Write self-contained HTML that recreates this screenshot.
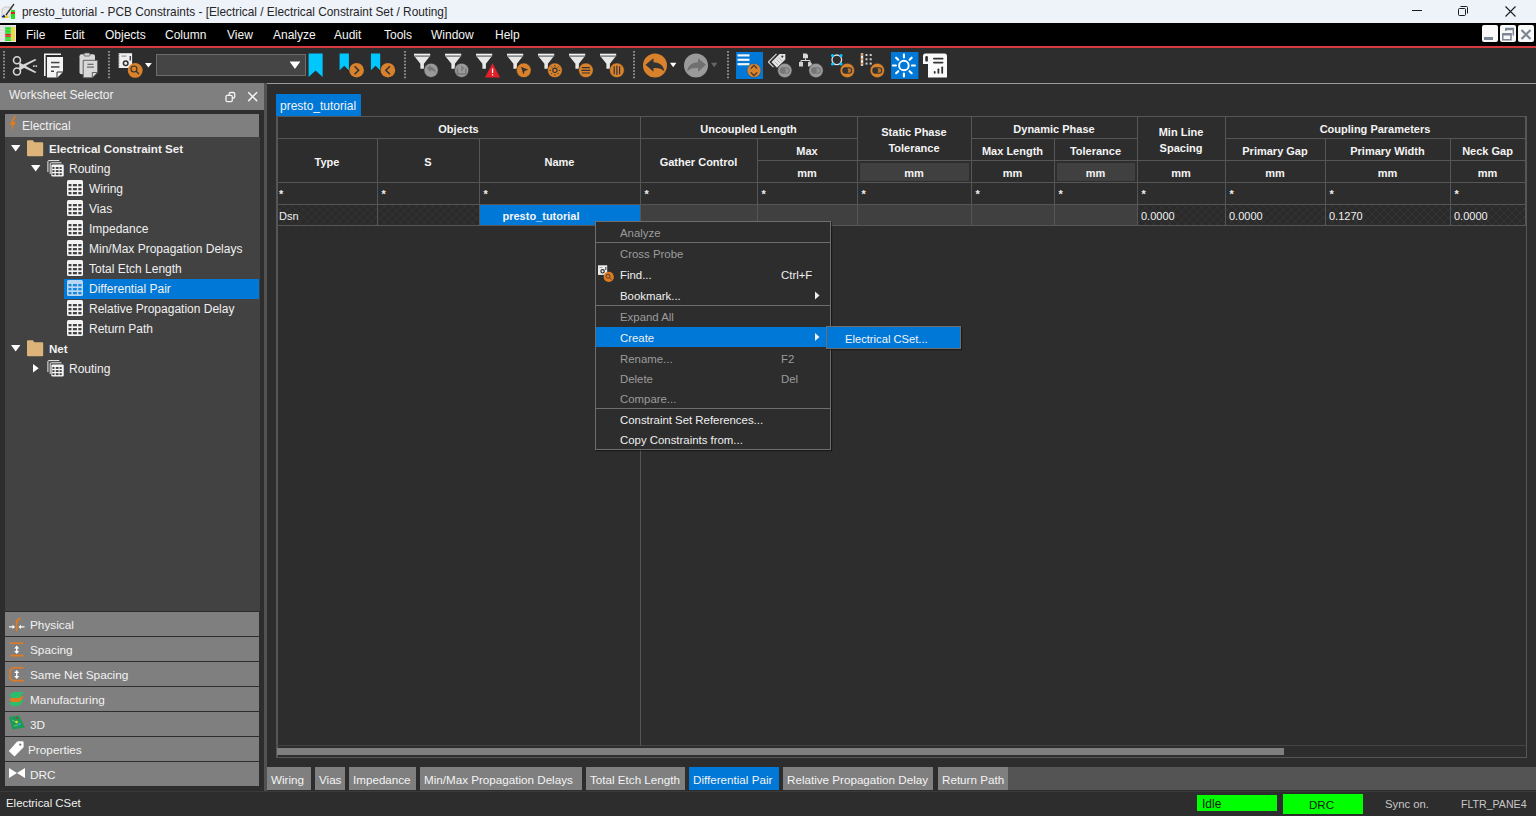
<!DOCTYPE html>
<html><head><meta charset="utf-8"><style>
*{box-sizing:border-box;margin:0;padding:0}
html,body{width:1536px;height:816px;overflow:hidden;background:#2d2d2d;font-family:"Liberation Sans",sans-serif;font-size:12px;color:#fff}
.a{position:absolute}
.t{position:absolute;white-space:nowrap;line-height:14px}
.b{font-weight:bold}
svg{position:absolute;overflow:visible}
.mdi{position:absolute;top:25px;width:16px;height:17px;background:#f9f9f9;border-radius:2px}
.lbtn{position:absolute;left:5px;width:254px;height:24px;background:#7f7f7f}
.lbtn .t{top:5px;left:25px;color:#f2f2f2}
.tr{color:#f0f0f0}
.hl{position:absolute;height:1px;background:#565656}
.vl{position:absolute;width:1px;background:#565656}
.hd{position:absolute;text-align:center;font-weight:bold;font-size:11px;line-height:14px;color:#f4f4f4;white-space:nowrap}
.cm{color:#f0f0f0}
.cmd{color:#9c9c9c}
.tab{position:absolute;top:767px;height:23px;background:#7f7f7f}
.tab .t{top:5px;left:4px;color:#f4f4f4}
.hatch{background-color:#2b2b2b;background-image:repeating-linear-gradient(45deg,rgba(255,255,255,.045) 0 1px,transparent 1px 5.66px),repeating-linear-gradient(-45deg,rgba(255,255,255,.045) 0 1px,transparent 1px 5.66px)}
</style></head><body>
<div class="a" style="left:0px;top:0px;width:1536px;height:23px;background:#eef2f9;"></div>
<div class="t" style="left:22px;top:5px;color:#262626;font-size:11.85px">presto_tutorial - PCB Constraints - [Electrical / Electrical Constraint Set / Routing]</div>
<svg style="left:0;top:0" width="1536" height="23"><line x1="1412" y1="10.5" x2="1422" y2="10.5" stroke="#1b1b1b" stroke-width="1"/><rect x="1458.5" y="8.5" width="7" height="7" fill="none" stroke="#1b1b1b" rx="1"/><path d="M1460.5 6.5h6a1 1 0 0 1 1 1v6" fill="none" stroke="#1b1b1b"/><path d="M1505.5 6.5l10 10M1515.5 6.5l-10 10" stroke="#1b1b1b" stroke-width="1.1"/></svg>
<svg style="left:0;top:0" width="20" height="23"><path d="M2 9 Q4 6 10 7 L12 8 L10 17 L2 18 Z" fill="#e8e8e8" stroke="#b0b0b0" stroke-width=".6"/><path d="M1.5 17 L4 14.5 L6 18 Z" fill="#001a8c"/><path d="M4 18 L7 14 L8 18 Z" fill="#e8d000"/><line x1="6" y1="15" x2="14" y2="4" stroke="#333" stroke-width="1.3"/><rect x="11" y="10" width="4" height="9" fill="#20e020"/><rect x="11" y="12" width="4" height="2" fill="#e02020"/></svg>
<div class="a" style="left:0px;top:23px;width:1536px;height:23px;background:#000;"></div>
<div class="t" style="left:26px;top:28px;color:#f4f4f4">File</div>
<div class="t" style="left:64px;top:28px;color:#f4f4f4">Edit</div>
<div class="t" style="left:105px;top:28px;color:#f4f4f4">Objects</div>
<div class="t" style="left:165px;top:28px;color:#f4f4f4">Column</div>
<div class="t" style="left:227px;top:28px;color:#f4f4f4">View</div>
<div class="t" style="left:273px;top:28px;color:#f4f4f4">Analyze</div>
<div class="t" style="left:334px;top:28px;color:#f4f4f4">Audit</div>
<div class="t" style="left:384px;top:28px;color:#f4f4f4">Tools</div>
<div class="t" style="left:431px;top:28px;color:#f4f4f4">Window</div>
<div class="t" style="left:495px;top:28px;color:#f4f4f4">Help</div>
<svg style="left:0;top:25px" width="17" height="18"><rect x="0" y="0" width="16" height="17" fill="#e8e8e8"/><rect x="5" y="2" width="6" height="14" fill="#22e022"/><rect x="11" y="2" width="4" height="14" fill="#f0e020"/><rect x="5" y="9" width="6" height="3" fill="#e02020"/><path d="M0 2H16M0 5H16M0 8H16M0 11H16M0 14H16M5 0V17M11 0V17" stroke="#c8c8c8" stroke-width=".5"/></svg>
<div class="a" style="left:1482px;top:25px;width:16px;height:17px;background:#f9f9f9;border-radius:2px"></div>
<div class="a" style="left:1500px;top:25px;width:16px;height:17px;background:#f9f9f9;border-radius:2px"></div>
<div class="a" style="left:1518px;top:25px;width:16px;height:17px;background:#f9f9f9;border-radius:2px"></div>
<svg style="left:0;top:0" width="1536" height="48"><rect x="1484" y="37" width="9" height="3" fill="#7b8794"/><path d="M1505.8 31V28.5H1513.3V35.5" fill="none" stroke="#7b8794" stroke-width="1.5"/><rect x="1505.8" y="28" width="7.8" height="2.2" fill="#7b8794"/><rect x="1502.8" y="33.8" width="8.2" height="6" fill="none" stroke="#7b8794" stroke-width="1.5"/><rect x="1502.3" y="33.2" width="9.2" height="2.3" fill="#7b8794"/><path d="M1521.5 30l9 9M1530.5 30l-9 9" stroke="#7b8794" stroke-width="2.2"/></svg>
<div class="a" style="left:0px;top:46px;width:1536px;height:2px;background:#d8393a;"></div>
<div class="a" style="left:0px;top:48px;width:1536px;height:35px;background:#2d2d2d;"></div>
<svg style="left:0;top:0" width="1536" height="83"><rect x="3" y="51.0" width="2" height="1.7" fill="#8c8c8c"/><rect x="3" y="54.2" width="2" height="1.7" fill="#8c8c8c"/><rect x="3" y="57.4" width="2" height="1.7" fill="#8c8c8c"/><rect x="3" y="60.6" width="2" height="1.7" fill="#8c8c8c"/><rect x="3" y="63.8" width="2" height="1.7" fill="#8c8c8c"/><rect x="3" y="67.0" width="2" height="1.7" fill="#8c8c8c"/><rect x="3" y="70.2" width="2" height="1.7" fill="#8c8c8c"/><rect x="3" y="73.4" width="2" height="1.7" fill="#8c8c8c"/><rect x="3" y="76.6" width="2" height="1.7" fill="#8c8c8c"/><rect x="108" y="51.0" width="2" height="1.7" fill="#8c8c8c"/><rect x="108" y="54.2" width="2" height="1.7" fill="#8c8c8c"/><rect x="108" y="57.4" width="2" height="1.7" fill="#8c8c8c"/><rect x="108" y="60.6" width="2" height="1.7" fill="#8c8c8c"/><rect x="108" y="63.8" width="2" height="1.7" fill="#8c8c8c"/><rect x="108" y="67.0" width="2" height="1.7" fill="#8c8c8c"/><rect x="108" y="70.2" width="2" height="1.7" fill="#8c8c8c"/><rect x="108" y="73.4" width="2" height="1.7" fill="#8c8c8c"/><rect x="108" y="76.6" width="2" height="1.7" fill="#8c8c8c"/><rect x="404" y="51.0" width="2" height="1.7" fill="#8c8c8c"/><rect x="404" y="54.2" width="2" height="1.7" fill="#8c8c8c"/><rect x="404" y="57.4" width="2" height="1.7" fill="#8c8c8c"/><rect x="404" y="60.6" width="2" height="1.7" fill="#8c8c8c"/><rect x="404" y="63.8" width="2" height="1.7" fill="#8c8c8c"/><rect x="404" y="67.0" width="2" height="1.7" fill="#8c8c8c"/><rect x="404" y="70.2" width="2" height="1.7" fill="#8c8c8c"/><rect x="404" y="73.4" width="2" height="1.7" fill="#8c8c8c"/><rect x="404" y="76.6" width="2" height="1.7" fill="#8c8c8c"/><rect x="633" y="51.0" width="2" height="1.7" fill="#8c8c8c"/><rect x="633" y="54.2" width="2" height="1.7" fill="#8c8c8c"/><rect x="633" y="57.4" width="2" height="1.7" fill="#8c8c8c"/><rect x="633" y="60.6" width="2" height="1.7" fill="#8c8c8c"/><rect x="633" y="63.8" width="2" height="1.7" fill="#8c8c8c"/><rect x="633" y="67.0" width="2" height="1.7" fill="#8c8c8c"/><rect x="633" y="70.2" width="2" height="1.7" fill="#8c8c8c"/><rect x="633" y="73.4" width="2" height="1.7" fill="#8c8c8c"/><rect x="633" y="76.6" width="2" height="1.7" fill="#8c8c8c"/><rect x="727" y="51.0" width="2" height="1.7" fill="#8c8c8c"/><rect x="727" y="54.2" width="2" height="1.7" fill="#8c8c8c"/><rect x="727" y="57.4" width="2" height="1.7" fill="#8c8c8c"/><rect x="727" y="60.6" width="2" height="1.7" fill="#8c8c8c"/><rect x="727" y="63.8" width="2" height="1.7" fill="#8c8c8c"/><rect x="727" y="67.0" width="2" height="1.7" fill="#8c8c8c"/><rect x="727" y="70.2" width="2" height="1.7" fill="#8c8c8c"/><rect x="727" y="73.4" width="2" height="1.7" fill="#8c8c8c"/><rect x="727" y="76.6" width="2" height="1.7" fill="#8c8c8c"/><g fill="none" stroke="#d8d8d8" stroke-width="1.6"><circle cx="17" cy="60.3" r="3.5"/><circle cx="17" cy="71.5" r="3.5"/></g><path d="M19.5 62.5 L36.5 72 L35 73 L19 65.5Z" fill="#d8d8d8"/><path d="M19.5 69.3 L36.5 60 L35 59 L19 66.5Z" fill="#d8d8d8"/><path d="M19.5 69.3 L26 65.5" stroke="#d8d8d8" stroke-width="2.4"/><rect x="30" y="65.3" width="1.6" height="1.6" fill="#2d2d2d"/><rect x="33" y="65.3" width="1.6" height="1.6" fill="#d8d8d8"/><rect x="35.5" y="65.3" width="1.6" height="1.6" fill="#d8d8d8"/><path d="M44 76V53.5H61v1.6H45.6V76Z" fill="#f4f4f4"/><path d="M47 57H63V72L57.5 77.5H47Z" fill="#f4f4f4"/><path d="M57 77.5V72H63" fill="none" stroke="#2d2d2d" stroke-width="1"/><rect x="51" y="61.8" width="8.5" height="1.5" fill="#444"/><rect x="51" y="66.2" width="8.5" height="1.5" fill="#444"/><rect x="51" y="70.5" width="3" height="1.5" fill="#444"/><rect x="79.5" y="54.2" width="15.5" height="20" rx="2" fill="#d8d8d8"/><rect x="84" y="53" width="6" height="3" rx="1" fill="#d8d8d8" stroke="#555" stroke-width=".8"/><path d="M83.2 60.3H97.7V72.5L92.5 77.8H83.2Z" fill="#d8d8d8" stroke="#555" stroke-width=".9"/><path d="M92.3 77.8V72.5H97.7" fill="none" stroke="#555" stroke-width=".9"/><rect x="87.5" y="63.7" width="6" height="1.2" fill="#666"/><rect x="87" y="66.5" width="7" height="1.2" fill="#666"/><rect x="118.7" y="53.2" width="13.4" height="14.8" fill="#f0f0f0"/><path d="M119.3 54v13.5" stroke="#999" stroke-dasharray="1 1.2" stroke-width=".8"/><circle cx="125.7" cy="63.3" r="2.3" fill="none" stroke="#333" stroke-width="1.5"/><rect x="121.5" y="55.5" width="5" height="1.2" fill="#999"/><rect x="129.6" y="56" width="1.3" height="4.5" fill="#333"/><circle cx="135.2" cy="70.4" r="7.4" fill="#d9822b"/><circle cx="134" cy="69" r="3" fill="none" stroke="#333" stroke-width="1.1"/><path d="M136.2 71.2l2.8 2.8" stroke="#333" stroke-width="1.3"/><path d="M145 63h6.8l-3.4 4.4z" fill="#fff"/><rect x="156.5" y="54.5" width="149" height="21" fill="#454545" stroke="#6c6c6c" stroke-width="1"/><path d="M289.6 61.5h10.7l-5.35 7.5z" fill="#fff"/><path d="M308.6 53.6H322.6V77L315.6 70.5L308.6 77Z" fill="#00c8ff"/><path d="M339.6 53.6H348.90000000000003V70.3L344.25 65.7L339.6 70.3Z" fill="#00c8ff"/><circle cx="356.6" cy="70.2" r="7.3" fill="#d9822b"/><path d="M354.6 66.2L358.6 70.2L354.6 74.2" fill="none" stroke="#333" stroke-width="1.6"/><path d="M370.9 53.6H380.2V70.3L375.54999999999995 65.7L370.9 70.3Z" fill="#00c8ff"/><circle cx="387.9" cy="70.2" r="7.3" fill="#d9822b"/><path d="M389.9 66.2L385.9 70.2L389.9 74.2" fill="none" stroke="#333" stroke-width="1.6"/><rect x="414" y="53.7" width="16.2" height="2" fill="#f2f2f2"/><rect x="414" y="55.7" width="16.2" height="1" fill="#8a8a8a"/><path d="M414.8 56.8H429.4L423.9 63.7V68.7H420.4V63.7Z" fill="#e8e8e8"/><rect x="445" y="53.7" width="16.2" height="2" fill="#f2f2f2"/><rect x="445" y="55.7" width="16.2" height="1" fill="#8a8a8a"/><path d="M445.8 56.8H460.4L454.9 63.7V68.7H451.4V63.7Z" fill="#e8e8e8"/><rect x="476" y="53.7" width="16.2" height="2" fill="#f2f2f2"/><rect x="476" y="55.7" width="16.2" height="1" fill="#8a8a8a"/><path d="M476.8 56.8H491.4L485.9 63.7V68.7H482.4V63.7Z" fill="#e8e8e8"/><rect x="507" y="53.7" width="16.2" height="2" fill="#f2f2f2"/><rect x="507" y="55.7" width="16.2" height="1" fill="#8a8a8a"/><path d="M507.8 56.8H522.4L516.9 63.7V68.7H513.4V63.7Z" fill="#e8e8e8"/><rect x="538" y="53.7" width="16.2" height="2" fill="#f2f2f2"/><rect x="538" y="55.7" width="16.2" height="1" fill="#8a8a8a"/><path d="M538.8 56.8H553.4L547.9 63.7V68.7H544.4V63.7Z" fill="#e8e8e8"/><rect x="569" y="53.7" width="16.2" height="2" fill="#f2f2f2"/><rect x="569" y="55.7" width="16.2" height="1" fill="#8a8a8a"/><path d="M569.8 56.8H584.4L578.9 63.7V68.7H575.4V63.7Z" fill="#e8e8e8"/><rect x="600" y="53.7" width="16.2" height="2" fill="#f2f2f2"/><rect x="600" y="55.7" width="16.2" height="1" fill="#8a8a8a"/><path d="M600.8 56.8H615.4L609.9 63.7V68.7H606.4V63.7Z" fill="#e8e8e8"/><circle cx="431.1" cy="70.3" r="7.1" fill="#9a9a9a" stroke="#2d2d2d" stroke-width=".6"/><path d="M427.1 68.0l3.3-3v2c3.5 0 5.2 2.5 5.5 6.3c-1.3-2.3-2.8-3-5.5-3v2z" fill="#777"/><circle cx="461.6" cy="70.3" r="7.1" fill="#9a9a9a" stroke="#2d2d2d" stroke-width=".6"/><path d="M457.40000000000003 68.5v5.5h8.4v-5.5" fill="none" stroke="#777" stroke-width="1.4"/><path d="M461.90000000000003 71.3v-4.5l2 2" fill="none" stroke="#777" stroke-width="1.2"/><path d="M492.5 63.2L500.1 77.5H484.9Z" fill="#e3202a"/><rect x="491.9" y="68.5" width="1.3" height="4.5" fill="#fff"/><rect x="491.9" y="74.2" width="1.3" height="1.3" fill="#fff"/><circle cx="523.8" cy="70.3" r="7.3" fill="#d9822b" stroke="#2d2d2d" stroke-width=".5"/><path d="M521.0 66.8L528.3 69.8L524.5999999999999 70.89999999999999L523.5 74.8Z" fill="#333"/><circle cx="554.9" cy="70.3" r="7.3" fill="#d9822b" stroke="#2d2d2d" stroke-width=".5"/><circle cx="554.9" cy="70.3" r="2.2" fill="none" stroke="#333" stroke-width="1.1"/><path d="M558.70 70.30L560.20 70.30M557.59 72.99L558.65 74.05M554.90 74.10L554.90 75.60M552.21 72.99L551.15 74.05M551.10 70.30L549.60 70.30M552.21 67.61L551.15 66.55M554.90 66.50L554.90 65.00M557.59 67.61L558.65 66.55" stroke="#333" stroke-width="1"/><circle cx="585.9" cy="70.3" r="7.3" fill="#d9822b" stroke="#2d2d2d" stroke-width=".5"/><path d="M581.9 67.6h8M581.4 70.3h9M581.9 73.0h8" stroke="#333" stroke-width="1.2"/><circle cx="616.9" cy="70.3" r="7.3" fill="#d9822b" stroke="#2d2d2d" stroke-width=".5"/><path d="M614.1999999999999 66.3v8M616.9 65.8v9M619.6 66.3v8" stroke="#333" stroke-width="1.2"/><circle cx="655" cy="65.4" r="12" fill="#d9822b"/><path d="M645.5 64.8L653.5 58.2V62.3C660 62.3 663.5 66 664.3 71.3C662 68.8 659 67.7 653.5 67.9V71.8Z" fill="#333"/><path d="M670 62.8h6.4l-3.2 4.5z" fill="#fff"/><circle cx="696" cy="65.4" r="12" fill="#9a9a9a"/><path d="M706 64.8L698 58.2V62.3C691.5 62.3 688 66 687.2 71.3C689.5 68.8 692.5 67.7 698 67.9V71.8Z" fill="#707070"/><path d="M711 62.8h6.4l-3.2 4.5z" fill="#666"/><rect x="736" y="52" width="27" height="27" fill="#0078d7"/><rect x="737.5" y="54.3" width="12" height="2.2" fill="#f4f4f4"/><rect x="737.5" y="58.7" width="12" height="2.2" fill="#f4f4f4"/><rect x="737.5" y="63.1" width="12" height="2.2" fill="#f4f4f4"/><circle cx="754" cy="70.5" r="7" fill="#d9822b" stroke="#0a5aa0" stroke-width=".6"/><path d="M750.8 68.6L754 65.4L757.2 68.6M750.8 72.4L754 75.6L757.2 72.4" fill="none" stroke="#333" stroke-width="1.1"/><path d="M768.3 62L776.5 53.8" stroke="#d8d8d8" stroke-width="1.1"/><path d="M768.3 62L773.5 67.2" stroke="#d8d8d8" stroke-width="1.1"/><path d="M771.5 62L779.5 54H785.3V59.5L777 67.8Z" fill="#e4e4e4"/><circle cx="782.3" cy="56.6" r="1.1" fill="#333"/><path d="M774.5 61.5l3.5 3.5M776.5 59.5l3.5 3.5M778.5 57.5l3.5 3.5" stroke="#999" stroke-width=".7"/><circle cx="784.8" cy="70.5" r="7.2" fill="#9a9a9a" stroke="#2d2d2d" stroke-width=".5"/><rect x="779.8" y="67.3" width="10" height="6.4" rx="3.2" fill="#777"/><path d="M785.0 68.3H786.5999999999999A2.2 2.2 0 0 1 786.5999999999999 72.7H785.0Z" fill="#9a9a9a" opacity=".8"/><circle cx="783.0" cy="70.5" r="2.4" fill="#777" stroke="#777" stroke-width=".5"/><path d="M803 53.5h3.5l1.5 1.5v3.3h-5z" fill="#d8d8d8"/><path d="M805.5 58.3v2.2M801 62v-1.5h9v1.5" fill="none" stroke="#d8d8d8" stroke-width="1"/><rect x="799" y="62" width="4" height="4.5" fill="#d0d0d0"/><path d="M808 62h2.5l2 2.2-2 2.3H808z" fill="#d0d0d0"/><circle cx="816" cy="70.5" r="7.2" fill="#9a9a9a" stroke="#2d2d2d" stroke-width=".5"/><rect x="811" y="67.3" width="10" height="6.4" rx="3.2" fill="#777"/><path d="M816.2 68.3H817.8A2.2 2.2 0 0 1 817.8 72.7H816.2Z" fill="#9a9a9a" opacity=".8"/><circle cx="814.2" cy="70.5" r="2.4" fill="#777" stroke="#777" stroke-width=".5"/><circle cx="836.8" cy="59.8" r="4.8" fill="none" stroke="#e4e4e4" stroke-width="1.3"/><circle cx="832.5" cy="55.5" r="1.6" fill="#00c8ff"/><circle cx="841" cy="55.5" r="1.6" fill="#00c8ff"/><circle cx="832.5" cy="64" r="1.6" fill="#00c8ff"/><circle cx="841" cy="64" r="1.6" fill="#00c8ff"/><circle cx="847.3" cy="70.5" r="7.2" fill="#d9822b" stroke="#2d2d2d" stroke-width=".5"/><rect x="842.3" y="67.3" width="10" height="6.4" rx="3.2" fill="#333"/><path d="M847.5 68.3H849.0999999999999A2.2 2.2 0 0 1 849.0999999999999 72.7H847.5Z" fill="#d9822b" opacity=".8"/><circle cx="845.5" cy="70.5" r="2.4" fill="#333" stroke="#333" stroke-width=".5"/><rect x="860.8" y="53.3" width="2.4" height="12.5" fill="#f0f0f0"/><circle cx="862" cy="55" r="1.1" fill="#d9822b"/><rect x="865.5" y="54" width="2" height="2" fill="#d0d0d0"/><rect x="869.7" y="54" width="2" height="2" fill="#d0d0d0"/><circle cx="862" cy="59.3" r="1.1" fill="#d9822b"/><rect x="865.5" y="58.3" width="2" height="2" fill="#d0d0d0"/><rect x="869.7" y="58.3" width="2" height="2" fill="#d0d0d0"/><circle cx="862" cy="63.6" r="1.1" fill="#d9822b"/><rect x="865.5" y="62.6" width="2" height="2" fill="#d0d0d0"/><rect x="869.7" y="62.6" width="2" height="2" fill="#d0d0d0"/><circle cx="877.3" cy="70.5" r="7.2" fill="#d9822b" stroke="#2d2d2d" stroke-width=".5"/><rect x="872.3" y="67.3" width="10" height="6.4" rx="3.2" fill="#333"/><path d="M877.5 68.3H879.0999999999999A2.2 2.2 0 0 1 879.0999999999999 72.7H877.5Z" fill="#d9822b" opacity=".8"/><circle cx="875.5" cy="70.5" r="2.4" fill="#333" stroke="#333" stroke-width=".5"/><rect x="891" y="52" width="27.4" height="27" fill="#0078d7"/><circle cx="903.9" cy="65.5" r="4.8" fill="none" stroke="#fff" stroke-width="1.9"/><path d="M911.90 65.50L914.90 65.50M909.56 71.16L911.68 73.28M903.90 73.50L903.90 76.50M898.24 71.16L896.12 73.28M895.90 65.50L892.90 65.50M898.24 59.84L896.12 57.72M903.90 57.50L903.90 54.50M909.56 59.84L911.68 57.72" stroke="#fff" stroke-width="2.1" stroke-linecap="round"/><path d="M923 64V56a2.5 2.5 0 0 1 2.5-2.5H944.5a2.5 2.5 0 0 1 2.5 2.5V77.6H928V64Z" fill="#fafafa"/><rect x="925.3" y="56" width="2.6" height="5.6" rx="1.2" fill="#2d2d2d"/><rect x="933" y="57.8" width="10.5" height="1.7" rx=".8" fill="#333"/><rect x="933" y="61.7" width="10.5" height="1.7" rx=".8" fill="#333"/><rect x="933.8" y="71" width="1.8" height="2.8" rx=".8" fill="#333"/><rect x="937.5" y="68.5" width="1.8" height="5.3" rx=".8" fill="#333"/><rect x="941.3" y="66.5" width="1.8" height="7.3" rx=".8" fill="#333"/></svg>
<div class="a" style="left:0px;top:83px;width:264px;height:27px;background:#7f7f7f;"></div>
<div class="t" style="left:9px;top:88px;color:#f0f0f0">Worksheet Selector</div>
<svg style="left:0;top:83px" width="264" height="27"><rect x="229.2" y="9.5" width="5.5" height="5.5" rx="1.3" fill="none" stroke="#f4f4f4" stroke-width="1.3"/><rect x="226" y="12.4" width="6.3" height="6.2" rx="1.3" fill="#7f7f7f" stroke="#f4f4f4" stroke-width="1.3"/><path d="M248.2 9.2l8.9 8.9M257.1 9.2l-8.9 8.9" stroke="#f4f4f4" stroke-width="1.5"/></svg>
<div class="a" style="left:264px;top:83px;width:3px;height:708px;background:#525252;"></div>
<div class="a" style="left:5px;top:114px;width:254px;height:23px;background:#7f7f7f;"></div>
<div class="t" style="left:22px;top:119px;color:#f0f0f0">Electrical</div>
<svg style="left:8px;top:116px" width="10" height="18"><path d="M6 0 L1.5 9 L4.5 9 L2 16 L8 6 L5 6 L8 0Z" fill="#e07b20"/></svg>
<div class="a" style="left:5px;top:137px;width:255px;height:474px;background:#424242;"></div>
<div class="a" style="left:64px;top:279px;width:195px;height:20px;background:#0078d7;"></div>
<div class="t" style="left:49px;top:142px;color:#f0f0f0;font-weight:bold;font-size:11.6px;">Electrical Constraint Set</div>
<div class="t" style="left:69px;top:162px;color:#f0f0f0;">Routing</div>
<div class="t" style="left:89px;top:182px;color:#f0f0f0;">Wiring</div>
<div class="t" style="left:89px;top:202px;color:#f0f0f0;">Vias</div>
<div class="t" style="left:89px;top:222px;color:#f0f0f0;">Impedance</div>
<div class="t" style="left:89px;top:242px;color:#f0f0f0;">Min/Max Propagation Delays</div>
<div class="t" style="left:89px;top:262px;color:#f0f0f0;">Total Etch Length</div>
<div class="t" style="left:89px;top:282px;color:#f0f0f0;">Differential Pair</div>
<div class="t" style="left:89px;top:302px;color:#f0f0f0;">Relative Propagation Delay</div>
<div class="t" style="left:89px;top:322px;color:#f0f0f0;">Return Path</div>
<div class="t" style="left:49px;top:342px;color:#f0f0f0;font-weight:bold;font-size:11.6px;">Net</div>
<div class="t" style="left:69px;top:362px;color:#f0f0f0;">Routing</div>
<svg style="left:0;top:0" width="264" height="400"><path d="M11 145h9.4l-4.7 6.6z" fill="#fff"/><path d="M27 141.2a1 1 0 0 1 1-1h5l1.2 2H42.2a1 1 0 0 1 1 1V155.2a1 1 0 0 1-1 1H28a1 1 0 0 1-1-1z" fill="#dcb47a"/><path d="M31 165h9.4l-4.7 6.6z" fill="#fff"/><path d="M47.9 172V161.6a1 1 0 0 1 1-1H59.3" fill="none" stroke="#ececec" stroke-width="1"/><path d="M50.2 174V163.8a1 1 0 0 1 1-1H61.5" fill="none" stroke="#ececec" stroke-width="1"/><rect x="51.4" y="164.4" width="12.3" height="12" rx="1.2" fill="#f6f6f6"/><rect x="52.4" y="167.0" width="2.1" height="1.9" fill="#444"/><rect x="55.8" y="167.0" width="2.8" height="1.9" fill="#444"/><rect x="59.599999999999994" y="167.0" width="2.1" height="1.9" fill="#444"/><rect x="52.4" y="170.1" width="2.1" height="1.9" fill="#444"/><rect x="55.8" y="170.1" width="2.8" height="1.9" fill="#444"/><rect x="59.599999999999994" y="170.1" width="2.1" height="1.9" fill="#444"/><rect x="52.4" y="173.20000000000002" width="2.1" height="1.9" fill="#444"/><rect x="55.8" y="173.20000000000002" width="2.8" height="1.9" fill="#444"/><rect x="59.599999999999994" y="173.20000000000002" width="2.1" height="1.9" fill="#444"/><rect x="67" y="180" width="16" height="16" rx="1.6" fill="#f4f4f4"/><rect x="68.5" y="184" width="3" height="2.3" fill="#424242"/><rect x="72.9" y="184" width="4" height="2.3" fill="#424242"/><rect x="78.3" y="184" width="3.2" height="2.3" fill="#424242"/><rect x="68.5" y="188" width="3" height="2.3" fill="#424242"/><rect x="72.9" y="188" width="4" height="2.3" fill="#424242"/><rect x="78.3" y="188" width="3.2" height="2.3" fill="#424242"/><rect x="68.5" y="192" width="3" height="2.3" fill="#424242"/><rect x="72.9" y="192" width="4" height="2.3" fill="#424242"/><rect x="78.3" y="192" width="3.2" height="2.3" fill="#424242"/><rect x="67" y="200" width="16" height="16" rx="1.6" fill="#f4f4f4"/><rect x="68.5" y="204" width="3" height="2.3" fill="#424242"/><rect x="72.9" y="204" width="4" height="2.3" fill="#424242"/><rect x="78.3" y="204" width="3.2" height="2.3" fill="#424242"/><rect x="68.5" y="208" width="3" height="2.3" fill="#424242"/><rect x="72.9" y="208" width="4" height="2.3" fill="#424242"/><rect x="78.3" y="208" width="3.2" height="2.3" fill="#424242"/><rect x="68.5" y="212" width="3" height="2.3" fill="#424242"/><rect x="72.9" y="212" width="4" height="2.3" fill="#424242"/><rect x="78.3" y="212" width="3.2" height="2.3" fill="#424242"/><rect x="67" y="220" width="16" height="16" rx="1.6" fill="#f4f4f4"/><rect x="68.5" y="224" width="3" height="2.3" fill="#424242"/><rect x="72.9" y="224" width="4" height="2.3" fill="#424242"/><rect x="78.3" y="224" width="3.2" height="2.3" fill="#424242"/><rect x="68.5" y="228" width="3" height="2.3" fill="#424242"/><rect x="72.9" y="228" width="4" height="2.3" fill="#424242"/><rect x="78.3" y="228" width="3.2" height="2.3" fill="#424242"/><rect x="68.5" y="232" width="3" height="2.3" fill="#424242"/><rect x="72.9" y="232" width="4" height="2.3" fill="#424242"/><rect x="78.3" y="232" width="3.2" height="2.3" fill="#424242"/><rect x="67" y="240" width="16" height="16" rx="1.6" fill="#f4f4f4"/><rect x="68.5" y="244" width="3" height="2.3" fill="#424242"/><rect x="72.9" y="244" width="4" height="2.3" fill="#424242"/><rect x="78.3" y="244" width="3.2" height="2.3" fill="#424242"/><rect x="68.5" y="248" width="3" height="2.3" fill="#424242"/><rect x="72.9" y="248" width="4" height="2.3" fill="#424242"/><rect x="78.3" y="248" width="3.2" height="2.3" fill="#424242"/><rect x="68.5" y="252" width="3" height="2.3" fill="#424242"/><rect x="72.9" y="252" width="4" height="2.3" fill="#424242"/><rect x="78.3" y="252" width="3.2" height="2.3" fill="#424242"/><rect x="67" y="260" width="16" height="16" rx="1.6" fill="#f4f4f4"/><rect x="68.5" y="264" width="3" height="2.3" fill="#424242"/><rect x="72.9" y="264" width="4" height="2.3" fill="#424242"/><rect x="78.3" y="264" width="3.2" height="2.3" fill="#424242"/><rect x="68.5" y="268" width="3" height="2.3" fill="#424242"/><rect x="72.9" y="268" width="4" height="2.3" fill="#424242"/><rect x="78.3" y="268" width="3.2" height="2.3" fill="#424242"/><rect x="68.5" y="272" width="3" height="2.3" fill="#424242"/><rect x="72.9" y="272" width="4" height="2.3" fill="#424242"/><rect x="78.3" y="272" width="3.2" height="2.3" fill="#424242"/><rect x="67" y="280" width="16" height="16" rx="1.6" fill="#b6d8f4"/><rect x="68.5" y="284" width="3" height="2.3" fill="#1a86dc"/><rect x="72.9" y="284" width="4" height="2.3" fill="#1a86dc"/><rect x="78.3" y="284" width="3.2" height="2.3" fill="#1a86dc"/><rect x="68.5" y="288" width="3" height="2.3" fill="#1a86dc"/><rect x="72.9" y="288" width="4" height="2.3" fill="#1a86dc"/><rect x="78.3" y="288" width="3.2" height="2.3" fill="#1a86dc"/><rect x="68.5" y="292" width="3" height="2.3" fill="#1a86dc"/><rect x="72.9" y="292" width="4" height="2.3" fill="#1a86dc"/><rect x="78.3" y="292" width="3.2" height="2.3" fill="#1a86dc"/><rect x="67" y="300" width="16" height="16" rx="1.6" fill="#f4f4f4"/><rect x="68.5" y="304" width="3" height="2.3" fill="#424242"/><rect x="72.9" y="304" width="4" height="2.3" fill="#424242"/><rect x="78.3" y="304" width="3.2" height="2.3" fill="#424242"/><rect x="68.5" y="308" width="3" height="2.3" fill="#424242"/><rect x="72.9" y="308" width="4" height="2.3" fill="#424242"/><rect x="78.3" y="308" width="3.2" height="2.3" fill="#424242"/><rect x="68.5" y="312" width="3" height="2.3" fill="#424242"/><rect x="72.9" y="312" width="4" height="2.3" fill="#424242"/><rect x="78.3" y="312" width="3.2" height="2.3" fill="#424242"/><rect x="67" y="320" width="16" height="16" rx="1.6" fill="#f4f4f4"/><rect x="68.5" y="324" width="3" height="2.3" fill="#424242"/><rect x="72.9" y="324" width="4" height="2.3" fill="#424242"/><rect x="78.3" y="324" width="3.2" height="2.3" fill="#424242"/><rect x="68.5" y="328" width="3" height="2.3" fill="#424242"/><rect x="72.9" y="328" width="4" height="2.3" fill="#424242"/><rect x="78.3" y="328" width="3.2" height="2.3" fill="#424242"/><rect x="68.5" y="332" width="3" height="2.3" fill="#424242"/><rect x="72.9" y="332" width="4" height="2.3" fill="#424242"/><rect x="78.3" y="332" width="3.2" height="2.3" fill="#424242"/><path d="M11 345h9.4l-4.7 6.6z" fill="#fff"/><path d="M27 341.2a1 1 0 0 1 1-1h5l1.2 2H42.2a1 1 0 0 1 1 1V355.2a1 1 0 0 1-1 1H28a1 1 0 0 1-1-1z" fill="#dcb47a"/><path d="M33 364v8.6l5.7-4.3z" fill="#fff"/><path d="M47.9 372V361.6a1 1 0 0 1 1-1H59.3" fill="none" stroke="#ececec" stroke-width="1"/><path d="M50.2 374V363.8a1 1 0 0 1 1-1H61.5" fill="none" stroke="#ececec" stroke-width="1"/><rect x="51.4" y="364.4" width="12.3" height="12" rx="1.2" fill="#f6f6f6"/><rect x="52.4" y="367.0" width="2.1" height="1.9" fill="#444"/><rect x="55.8" y="367.0" width="2.8" height="1.9" fill="#444"/><rect x="59.599999999999994" y="367.0" width="2.1" height="1.9" fill="#444"/><rect x="52.4" y="370.09999999999997" width="2.1" height="1.9" fill="#444"/><rect x="55.8" y="370.09999999999997" width="2.8" height="1.9" fill="#444"/><rect x="59.599999999999994" y="370.09999999999997" width="2.1" height="1.9" fill="#444"/><rect x="52.4" y="373.2" width="2.1" height="1.9" fill="#444"/><rect x="55.8" y="373.2" width="2.8" height="1.9" fill="#444"/><rect x="59.599999999999994" y="373.2" width="2.1" height="1.9" fill="#444"/></svg>
<div class="a" style="left:5px;top:612px;width:254px;height:24px;background:#7f7f7f;"></div>
<div class="t" style="left:30px;top:618px;color:#f2f2f2;font-size:11.8px">Physical</div>
<div class="a" style="left:5px;top:637px;width:254px;height:24px;background:#7f7f7f;"></div>
<div class="t" style="left:30px;top:643px;color:#f2f2f2;font-size:11.8px">Spacing</div>
<div class="a" style="left:5px;top:662px;width:254px;height:24px;background:#7f7f7f;"></div>
<div class="t" style="left:30px;top:668px;color:#f2f2f2;font-size:11.8px">Same Net Spacing</div>
<div class="a" style="left:5px;top:687px;width:254px;height:24px;background:#7f7f7f;"></div>
<div class="t" style="left:30px;top:693px;color:#f2f2f2;font-size:11.8px">Manufacturing</div>
<div class="a" style="left:5px;top:712px;width:254px;height:24px;background:#7f7f7f;"></div>
<div class="t" style="left:30px;top:718px;color:#f2f2f2;font-size:11.8px">3D</div>
<div class="a" style="left:5px;top:737px;width:254px;height:24px;background:#7f7f7f;"></div>
<div class="t" style="left:28px;top:743px;color:#f2f2f2;font-size:11.8px">Properties</div>
<div class="a" style="left:5px;top:762px;width:254px;height:24px;background:#7f7f7f;"></div>
<div class="t" style="left:30px;top:768px;color:#f2f2f2;font-size:11.8px">DRC</div>
<svg style="left:0;top:0" width="30" height="790"><path d="M20.5 618.3Q17 619.5 16.5 622.5V631" fill="none" stroke="#e07b20" stroke-width="1.8"/><path d="M9 626.9h4" stroke="#fff" stroke-width="1.2"/><path d="M12.5 624.8l2.5 2.1-2.5 2.1z" fill="#fff"/><path d="M24.5 626.9h-4" stroke="#fff" stroke-width="1.2"/><path d="M21 624.8l-2.5 2.1 2.5 2.1z" fill="#fff"/><path d="M9.9 643.3h13.7M9.9 655.6h13.7" stroke="#e07b20" stroke-width="1.6"/><path d="M16.7 647.5V652" stroke="#fff" stroke-width="1.4"/><path d="M14.2 648.5L16.7 645.5L19.2 648.5z M14.2 651L16.7 654L19.2 651z" fill="#fff"/><path d="M23.6 667.8H12.5L10 670.5V678L12.5 680.6H23.6" fill="none" stroke="#e07b20" stroke-width="1.6"/><path d="M16.7 672V677" stroke="#fff" stroke-width="1.4"/><path d="M14.2 673L16.7 670L19.2 673z M14.2 676L16.7 679L19.2 676z" fill="#fff"/><path d="M9 703L14 700H24L19 706H12Z" fill="#2dbd6e"/><path d="M9 699.5L13.5 696.5H24L19.5 702H12Z" fill="#e07b20"/><path d="M9 695L13.5 692H24L19.5 698H12Z" fill="#2dbd6e"/><path d="M9 717L19 715.5L25 727.5L12.5 729.5Z" fill="#1c9a58"/><circle cx="16.5" cy="722" r="1.3" fill="#e8e020"/><circle cx="19.5" cy="724" r="1.2" fill="#3aa0e0"/><circle cx="17" cy="718" r="1" fill="#a04020"/><path d="M12 720l3 1.5M14 726l4-1" stroke="#90e0b0" stroke-width=".6"/><path d="M16.5 742.2Q17.2 741.2 18.5 741.2H22.3Q23.6 741.2 23.6 742.5V747.3L14.5 756.6L8.8 750.9Z" fill="#fff"/><circle cx="20.2" cy="744.6" r="1.2" fill="#7f7f7f"/><path d="M9 768L17 773L9 778Z M25 768L17 773L25 778Z" fill="#fff"/></svg>
<div class="a" style="left:0px;top:791px;width:1536px;height:1px;background:#3a3a3a;"></div>
<div class="t" style="left:6px;top:796px;color:#f0f0f0;font-size:11.4px">Electrical CSet</div>
<div class="a" style="left:1197px;top:795px;width:80px;height:16px;background:#00ff00;"></div>
<div class="t" style="left:1202px;top:797px;color:#102010">Idle</div>
<div class="a" style="left:1283px;top:794px;width:80px;height:20px;background:#00ff00;"></div>
<div class="t" style="left:1309px;top:798px;color:#102010;font-size:11.6px">DRC</div>
<div class="t" style="left:1385px;top:797px;color:#c8c8c8;font-size:11.3px">Sync on.</div>
<div class="t" style="left:1461px;top:797px;color:#c8c8c8;font-size:10.6px">FLTR_PANE4</div>
<div class="a" style="left:267px;top:83px;width:1269px;height:1px;background:#9a9a9a;"></div>
<div class="a" style="left:276px;top:94px;width:85px;height:22px;background:#0078d7;"></div>
<div class="t" style="left:280px;top:99px;color:#f4f4f4">presto_tutorial</div>
<div class="a" style="left:276px;top:116px;width:2px;height:642px;background:#565656;"></div>
<div class="a" style="left:1526px;top:116px;width:1px;height:642px;background:#565656;"></div>
<div class="a" style="left:276px;top:116px;width:1251px;height:1px;background:#565656;"></div>
<div class="a" style="left:276px;top:757px;width:1251px;height:1px;background:#565656;"></div>
<div class="a" style="left:276px;top:745px;width:1250px;height:1px;background:#444444;"></div>
<div class="a" style="left:277px;top:748px;width:1007px;height:7px;background:#7f7f7f;"></div>
<div class="a" style="left:277px;top:138px;width:1249px;height:1px;background:#565656;"></div>
<div class="a" style="left:858px;top:137px;width:113px;height:2px;background:#2d2d2d;"></div>
<div class="a" style="left:1138px;top:137px;width:87px;height:2px;background:#2d2d2d;"></div>
<div class="a" style="left:757px;top:160px;width:101px;height:1px;background:#565656;"></div>
<div class="a" style="left:971px;top:160px;width:167px;height:1px;background:#565656;"></div>
<div class="a" style="left:1225px;top:160px;width:301px;height:1px;background:#565656;"></div>
<div class="a" style="left:857px;top:160px;width:115px;height:1px;background:#565656;"></div>
<div class="a" style="left:1137px;top:160px;width:89px;height:1px;background:#565656;"></div>
<div class="a" style="left:277px;top:182px;width:1249px;height:1px;background:#565656;"></div>
<div class="a" style="left:277px;top:204px;width:1249px;height:1px;background:#565656;"></div>
<div class="a" style="left:277px;top:225px;width:1249px;height:1px;background:#565656;"></div>
<div class="a" style="left:377px;top:138px;width:1px;height:88px;background:#565656;"></div>
<div class="a" style="left:479px;top:138px;width:1px;height:88px;background:#565656;"></div>
<div class="a" style="left:640px;top:116px;width:1px;height:630px;background:#565656;"></div>
<div class="a" style="left:757px;top:138px;width:1px;height:88px;background:#565656;"></div>
<div class="a" style="left:857px;top:116px;width:1px;height:110px;background:#565656;"></div>
<div class="a" style="left:971px;top:116px;width:1px;height:110px;background:#565656;"></div>
<div class="a" style="left:1054px;top:138px;width:1px;height:88px;background:#565656;"></div>
<div class="a" style="left:1137px;top:116px;width:1px;height:110px;background:#565656;"></div>
<div class="a" style="left:1225px;top:116px;width:1px;height:110px;background:#565656;"></div>
<div class="a" style="left:1325px;top:138px;width:1px;height:88px;background:#565656;"></div>
<div class="a" style="left:1450px;top:138px;width:1px;height:88px;background:#565656;"></div>
<div class="a" style="left:1525px;top:116px;width:1px;height:110px;background:#565656;"></div>
<div class="a hatch" style="left:278px;top:205px;width:99px;height:20px;background:"></div>
<div class="a hatch" style="left:378px;top:205px;width:101px;height:20px;background:"></div>
<div class="a " style="left:480px;top:205px;width:160px;height:20px;background:#0078d7"></div>
<div class="a " style="left:641px;top:205px;width:116px;height:20px;background:#404040"></div>
<div class="a " style="left:758px;top:205px;width:99px;height:20px;background:#404040"></div>
<div class="a " style="left:858px;top:205px;width:113px;height:20px;background:#404040"></div>
<div class="a " style="left:972px;top:205px;width:82px;height:20px;background:#404040"></div>
<div class="a " style="left:1055px;top:205px;width:82px;height:20px;background:#404040"></div>
<div class="a hatch" style="left:1138px;top:205px;width:87px;height:20px;background:"></div>
<div class="a hatch" style="left:1226px;top:205px;width:99px;height:20px;background:"></div>
<div class="a hatch" style="left:1326px;top:205px;width:124px;height:20px;background:"></div>
<div class="a hatch" style="left:1451px;top:205px;width:74px;height:20px;background:"></div>
<div class="a" style="left:860px;top:163px;width:109px;height:18px;background:#404040;"></div>
<div class="a" style="left:1057px;top:163px;width:78px;height:18px;background:#404040;"></div>
<div class="hd" style="left:277px;top:122px;width:363px;line-height:14px">Objects</div>
<div class="hd" style="left:277px;top:155px;width:100px;line-height:14px">Type</div>
<div class="hd" style="left:377px;top:155px;width:102px;line-height:14px">S</div>
<div class="hd" style="left:479px;top:155px;width:161px;line-height:14px">Name</div>
<div class="hd" style="left:640px;top:122px;width:217px;line-height:14px">Uncoupled Length</div>
<div class="hd" style="left:640px;top:155px;width:117px;line-height:14px">Gather Control</div>
<div class="hd" style="left:757px;top:144px;width:100px;line-height:14px">Max</div>
<div class="hd" style="left:757px;top:166px;width:100px;line-height:14px">mm</div>
<div class="hd" style="left:857px;top:125px;width:114px;line-height:15.6px">Static Phase<br>Tolerance</div>
<div class="hd" style="left:857px;top:166px;width:114px;line-height:14px">mm</div>
<div class="hd" style="left:971px;top:122px;width:166px;line-height:14px">Dynamic Phase</div>
<div class="hd" style="left:971px;top:144px;width:83px;line-height:14px">Max Length</div>
<div class="hd" style="left:1054px;top:144px;width:83px;line-height:14px">Tolerance</div>
<div class="hd" style="left:971px;top:166px;width:83px;line-height:14px">mm</div>
<div class="hd" style="left:1054px;top:166px;width:83px;line-height:14px">mm</div>
<div class="hd" style="left:1137px;top:125px;width:88px;line-height:15.6px">Min Line<br>Spacing</div>
<div class="hd" style="left:1137px;top:166px;width:88px;line-height:14px">mm</div>
<div class="hd" style="left:1225px;top:122px;width:300px;line-height:14px">Coupling Parameters</div>
<div class="hd" style="left:1225px;top:144px;width:100px;line-height:14px">Primary Gap</div>
<div class="hd" style="left:1325px;top:144px;width:125px;line-height:14px">Primary Width</div>
<div class="hd" style="left:1450px;top:144px;width:75px;line-height:14px">Neck Gap</div>
<div class="hd" style="left:1225px;top:166px;width:100px;line-height:14px">mm</div>
<div class="hd" style="left:1325px;top:166px;width:125px;line-height:14px">mm</div>
<div class="hd" style="left:1450px;top:166px;width:75px;line-height:14px">mm</div>
<div class="t" style="left:279px;top:187px;color:#f0f0f0;font-weight:bold;font-size:11px">*</div>
<div class="t" style="left:381.5px;top:187px;color:#f0f0f0;font-weight:bold;font-size:11px">*</div>
<div class="t" style="left:483.5px;top:187px;color:#f0f0f0;font-weight:bold;font-size:11px">*</div>
<div class="t" style="left:644.5px;top:187px;color:#f0f0f0;font-weight:bold;font-size:11px">*</div>
<div class="t" style="left:761.5px;top:187px;color:#f0f0f0;font-weight:bold;font-size:11px">*</div>
<div class="t" style="left:861.5px;top:187px;color:#f0f0f0;font-weight:bold;font-size:11px">*</div>
<div class="t" style="left:975.5px;top:187px;color:#f0f0f0;font-weight:bold;font-size:11px">*</div>
<div class="t" style="left:1058.5px;top:187px;color:#f0f0f0;font-weight:bold;font-size:11px">*</div>
<div class="t" style="left:1141.5px;top:187px;color:#f0f0f0;font-weight:bold;font-size:11px">*</div>
<div class="t" style="left:1229.5px;top:187px;color:#f0f0f0;font-weight:bold;font-size:11px">*</div>
<div class="t" style="left:1329.5px;top:187px;color:#f0f0f0;font-weight:bold;font-size:11px">*</div>
<div class="t" style="left:1454.5px;top:187px;color:#f0f0f0;font-weight:bold;font-size:11px">*</div>
<div class="t" style="left:279px;top:209px;color:#f0f0f0;font-size:11px">Dsn</div>
<div class="hd" style="left:479px;top:209px;width:124px">presto_tutorial</div>
<div class="t" style="left:1141px;top:209px;color:#f0f0f0;font-size:11px">0.0000</div>
<div class="t" style="left:1229px;top:209px;color:#f0f0f0;font-size:11px">0.0000</div>
<div class="t" style="left:1329px;top:209px;color:#f0f0f0;font-size:11px">0.1270</div>
<div class="t" style="left:1454px;top:209px;color:#f0f0f0;font-size:11px">0.0000</div>
<div class="a" style="left:267px;top:767px;width:44px;height:23px;background:#7f7f7f;"></div>
<div class="t" style="left:271px;top:773px;color:#f4f4f4;font-size:11.65px">Wiring</div>
<div class="a" style="left:315px;top:767px;width:30px;height:23px;background:#7f7f7f;"></div>
<div class="t" style="left:319px;top:773px;color:#f4f4f4;font-size:11.65px">Vias</div>
<div class="a" style="left:349px;top:767px;width:67px;height:23px;background:#7f7f7f;"></div>
<div class="t" style="left:353px;top:773px;color:#f4f4f4;font-size:11.65px">Impedance</div>
<div class="a" style="left:420px;top:767px;width:162px;height:23px;background:#7f7f7f;"></div>
<div class="t" style="left:424px;top:773px;color:#f4f4f4;font-size:11.65px">Min/Max Propagation Delays</div>
<div class="a" style="left:586px;top:767px;width:99px;height:23px;background:#7f7f7f;"></div>
<div class="t" style="left:590px;top:773px;color:#f4f4f4;font-size:11.65px">Total Etch Length</div>
<div class="a" style="left:689px;top:767px;width:90px;height:23px;background:#0078d7;"></div>
<div class="t" style="left:693px;top:773px;color:#f4f4f4;font-size:11.65px">Differential Pair</div>
<div class="a" style="left:783px;top:767px;width:150px;height:23px;background:#7f7f7f;"></div>
<div class="t" style="left:787px;top:773px;color:#f4f4f4;font-size:11.65px">Relative Propagation Delay</div>
<div class="a" style="left:938px;top:767px;width:70px;height:23px;background:#7f7f7f;"></div>
<div class="t" style="left:942px;top:773px;color:#f4f4f4;font-size:11.65px">Return Path</div>
<div class="a" style="left:1008px;top:767px;width:528px;height:23px;background:#545454;"></div>
<div class="a" style="left:595px;top:221px;width:236px;height:229px;background:#2d2d2d;border:1px solid #6e6e6e;box-shadow:1px 1px 1px rgba(0,0,0,.45)"></div>
<div class="a" style="left:596px;top:242px;width:234px;height:1px;background:#6e6e6e;"></div>
<div class="a" style="left:596px;top:305px;width:234px;height:1px;background:#6e6e6e;"></div>
<div class="a" style="left:596px;top:408px;width:234px;height:1px;background:#6e6e6e;"></div>
<div class="a" style="left:596px;top:327px;width:230px;height:20px;background:#0078d7;"></div>
<div class="t" style="left:620px;top:226px;color:#9c9c9c;font-size:11.4px">Analyze</div>
<div class="t" style="left:620px;top:247px;color:#9c9c9c;font-size:11.4px">Cross Probe</div>
<div class="t" style="left:620px;top:268px;color:#f0f0f0;font-size:11.4px">Find...</div>
<div class="t" style="left:620px;top:289px;color:#f0f0f0;font-size:11.4px">Bookmark...</div>
<div class="t" style="left:620px;top:310px;color:#9c9c9c;font-size:11.4px">Expand All</div>
<div class="t" style="left:620px;top:331px;color:#f0f0f0;font-size:11.4px">Create</div>
<div class="t" style="left:620px;top:352px;color:#9c9c9c;font-size:11.4px">Rename...</div>
<div class="t" style="left:781px;top:352px;color:#9c9c9c;font-size:11.4px">F2</div>
<div class="t" style="left:620px;top:372px;color:#9c9c9c;font-size:11.4px">Delete</div>
<div class="t" style="left:781px;top:372px;color:#9c9c9c;font-size:11.4px">Del</div>
<div class="t" style="left:620px;top:392px;color:#9c9c9c;font-size:11.4px">Compare...</div>
<div class="t" style="left:620px;top:413px;color:#f0f0f0;font-size:11.4px">Constraint Set References...</div>
<div class="t" style="left:620px;top:433px;color:#f0f0f0;font-size:11.4px">Copy Constraints from...</div>
<div class="t" style="left:781px;top:268px;color:#f0f0f0;font-size:11.4px">Ctrl+F</div>
<svg style="left:0;top:0" width="1536" height="816"><path d="M815 291.5l4.5 4-4.5 4z" fill="#f0f0f0"/><path d="M815 333l4.5 4-4.5 4z" fill="#f0f0f0"/></svg>
<svg style="left:0;top:0" width="700" height="300"><rect x="598" y="265.3" width="9.2" height="9.6" fill="#ececec"/><circle cx="602.6" cy="271.3" r="1.7" fill="none" stroke="#333" stroke-width="1.2"/><rect x="605.3" y="267" width="1" height="3" fill="#333"/><rect x="599.5" y="267" width="3" height=".8" fill="#999"/><circle cx="608.75" cy="276.9" r="5.1" fill="#e07b20"/><circle cx="608" cy="276.2" r="2" fill="none" stroke="#3a3a3a" stroke-width=".9"/><path d="M609.5 277.7l1.8 1.8" stroke="#3a3a3a" stroke-width="1"/></svg>
<div class="a" style="left:826px;top:326px;width:135px;height:23px;background:#0078d7;border:1px solid #6e6e6e;box-shadow:1px 1px 1px rgba(0,0,0,.4)"></div>
<div class="t" style="left:845px;top:332px;color:#f4f4f4;font-size:11.2px">Electrical CSet...</div>
</body></html>
